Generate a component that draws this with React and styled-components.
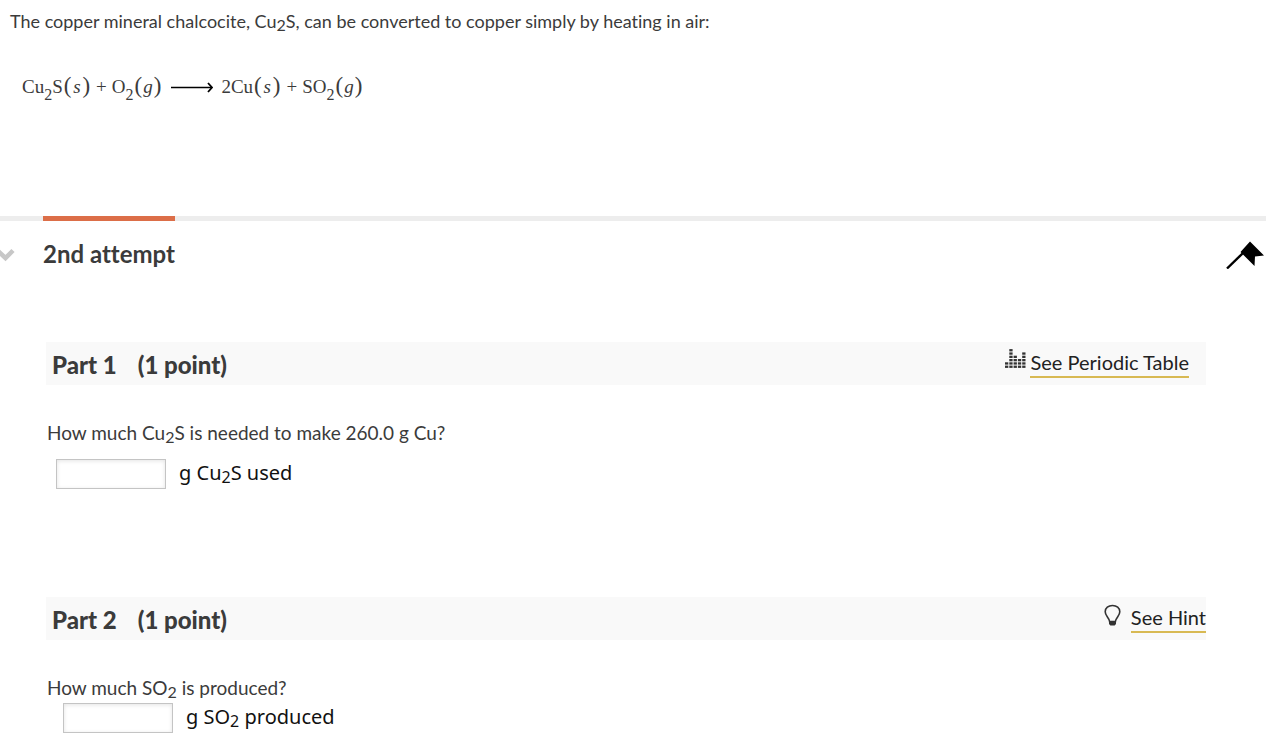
import React from 'react';
import styled, { createGlobalStyle } from 'styled-components'

const GlobalStyle = createGlobalStyle`
  body {
    margin: 0;
    background-color: #fff;
    color: #3b3b3b;
    font-family: Lato, sans-serif;
    font-size: 19px;
    line-height: 28px;
    font-variant-ligatures: none;
  }
  * {
    box-sizing: border-box;
  }
`

const Sub = styled.sub`
  font-size: 16px;
  line-height: 0;
  vertical-align: -3px;
`

const Page = styled.main`
  overflow-x: hidden;
`

const Intro = styled.p`
  margin: 0;
  padding: 7px 10px 0;
  font-size: 18px;
`

const Equation = styled.div`
  display: flex;
  align-items: baseline;
  height: 28px;
  margin: 37px 22px 116px;
  font-family: "Liberation Serif", serif;
  font-size: 19px;
`

const State = styled.span`
  display: inline-flex;
  align-items: baseline;
  gap: 1px;
  margin-left: 1px;
  i {
    min-width: 9px;
    text-align: center;
  }
`

const Paren = styled.span`
  font-size: 23px;
  line-height: 28px;
`

const EquationSub = styled.sub`
  font-size: 16px;
  line-height: 0;
  vertical-align: -7px;
`

const Plus = styled.span`
  margin: 0 5px 0 6px;
`

const Arrow = styled.svg`
  width: 42px;
  height: 12px;
  margin: 0 8px 0 10px;
  flex: none;
`

const Attempt = styled.section`
  border-top: 5px solid #ededed;
`

const AttemptHeader = styled.header`
  display: flex;
  align-items: flex-start;
  justify-content: space-between;
`

const Toggle = styled.button`
  width: 43px;
  height: 68px;
  padding: 0;
  border: 0;
  background: none;
  cursor: pointer;
  svg {
    display: block;
  }
`

const AttemptTitle = styled.h2`
  margin: -5px auto 0 0;
  padding-top: 18px;
  border-top: 5px solid #dc6e48;
  font-size: 24px;
  line-height: 30px;
  font-weight: bold;
`

const PinButton = styled.button`
  display: block;
  margin-top: 20px;
  padding: 0;
  border: 0;
  background: none;
  cursor: pointer;
  svg {
    display: block;
  }
`

const Part = styled.section`
  margin: ${props => props.$first ? '53px' : '108px'} 60px 0 46px;
`

const PartHeader = styled.header`
  display: flex;
  align-items: center;
  justify-content: space-between;
  height: 43px;
  padding-left: 6px;
  padding-right: ${props => props.$inset ? '17px' : '0'};
  background-color: #f9f9f9;
`

const PartTitle = styled.h3`
  display: flex;
  gap: 21px;
  margin: 0;
  padding-top: 2px;
  font-size: 24px;
  line-height: 30px;
  font-weight: 900;
`

const Tool = styled.div`
  display: flex;
  align-items: flex-start;
  gap: ${props => props.$gap};
`

const ToolLink = styled.a`
  border-bottom: 2px solid #d8b953;
  color: #222;
  font-size: 20px;
  line-height: 27px;
  text-decoration: none;
`

const Question = styled.p`
  margin: 0;
  padding: 34px 1px 0;
`

const Answer = styled.label`
  display: flex;
  align-items: flex-start;
  gap: 13px;
  width: fit-content;
  margin: ${props => props.$tight ? '1px 0 0 17px' : '12px 0 0 10px'};
  color: #111;
  font-family: "Noto Sans", "Open Sans", sans-serif;
  font-size: 20px;
`

const AnswerInput = styled.input`
  width: 110px;
  height: 30px;
  padding: 2px 6px;
  border: 1px solid #c4c4c4;
  border-radius: 0;
  background-color: #fff;
  box-shadow: inset 0 1px 4px #e4e4e4;
  font-size: 19px;
`

const Chevron = () => (
  <svg width="15" height="68" viewBox="0 0 15 68" fill="none" aria-hidden="true">
    <path d="M-3 29 L5.5 37 L13 29.5" stroke="#c7c7c7" strokeWidth="4.5" />
  </svg>
)

const Pin = () => (
  <svg width="40" height="28" viewBox="0 0 40 28" aria-hidden="true">
    <path d="M24 0.5 L38 14.5 L29 15.5 L28.5 25 L17.5 14 L14.5 11 Z" fill="#000" />
    <path d="M1 27.5 L17 12" stroke="#000" strokeWidth="2.4" />
  </svg>
)

// dots per column, left to right
const dotCounts = [2, 6, 4, 3, 5]

const PeriodicIcon = () => (
  <svg width="21" height="21" viewBox="0 0 21 21" fill="#333" aria-hidden="true">
    {dotCounts.map((count, x) => (
      Array.from({ length: count }, (_, y) => (
        <rect key={`${x}-${y}`} x={x * 4.3} y={16.6 - y * 3.3} width="3.3" height="2.3" />
      ))
    ))}
  </svg>
)

const Bulb = () => (
  <svg width="17" height="22" viewBox="0 0 17 22" fill="none" aria-hidden="true">
    <path d="M5.6 17.5 C5.2 13.5 1.2 12 1.2 7.8 C1.2 4 4.4 1.5 8.5 1.5 C12.6 1.5 15.8 4 15.8 7.8 C15.8 12 11.8 13.5 11.4 17.5 Z" stroke="#333" strokeWidth="1.6" />
    <path d="M5 17 H12 V20 L10.6 21.5 H6.4 L5 20 Z" fill="#333" />
  </svg>
)

const Phase = ({ children }) => (
  <State><Paren>(</Paren><i>{children}</i><Paren>)</Paren></State>
)

const App = () => {
  return (
    <Page>
      <GlobalStyle />
      <Intro>The copper mineral chalcocite, Cu<Sub>2</Sub>S, can be converted to copper simply by heating in air:</Intro>
      <Equation>
        <span>Cu<EquationSub>2</EquationSub>S</span><Phase>s</Phase>
        <Plus>+</Plus>
        <span>O<EquationSub>2</EquationSub></span><Phase>g</Phase>
        <Arrow viewBox="0 0 42 12" fill="none" stroke="#000" role="img" aria-label="yields">
          <path d="M0 6.5 H41" strokeWidth="1.6" />
          <path d="M37 2 L41 6.5 L37 11" strokeWidth="1.8" />
        </Arrow>
        <span>2Cu</span><Phase>s</Phase>
        <Plus>+</Plus>
        <span>SO<EquationSub>2</EquationSub></span><Phase>g</Phase>
      </Equation>
      <Attempt>
        <AttemptHeader>
          <Toggle aria-label="Collapse attempt"><Chevron /></Toggle>
          <AttemptTitle>2nd attempt</AttemptTitle>
          <PinButton aria-label="Pin"><Pin /></PinButton>
        </AttemptHeader>
        <Part $first>
          <PartHeader $inset>
            <PartTitle><span>Part 1</span><span>(1 point)</span></PartTitle>
            <Tool $gap="4px">
              <PeriodicIcon />
              <ToolLink href="#periodic-table">See Periodic Table</ToolLink>
            </Tool>
          </PartHeader>
          <Question>How much Cu<Sub>2</Sub>S is needed to make 260.0 g Cu?</Question>
          <Answer>
            <AnswerInput type="text" />
            <span>g Cu<Sub>2</Sub>S used</span>
          </Answer>
        </Part>
        <Part>
          <PartHeader>
            <PartTitle><span>Part 2</span><span>(1 point)</span></PartTitle>
            <Tool $gap="10px">
              <Bulb />
              <ToolLink href="#hint">See Hint</ToolLink>
            </Tool>
          </PartHeader>
          <Question>How much SO<Sub>2</Sub> is produced?</Question>
          <Answer $tight>
            <AnswerInput type="text" />
            <span>g SO<Sub>2</Sub> produced</span>
          </Answer>
        </Part>
      </Attempt>
    </Page>
  )
}

export default App;
